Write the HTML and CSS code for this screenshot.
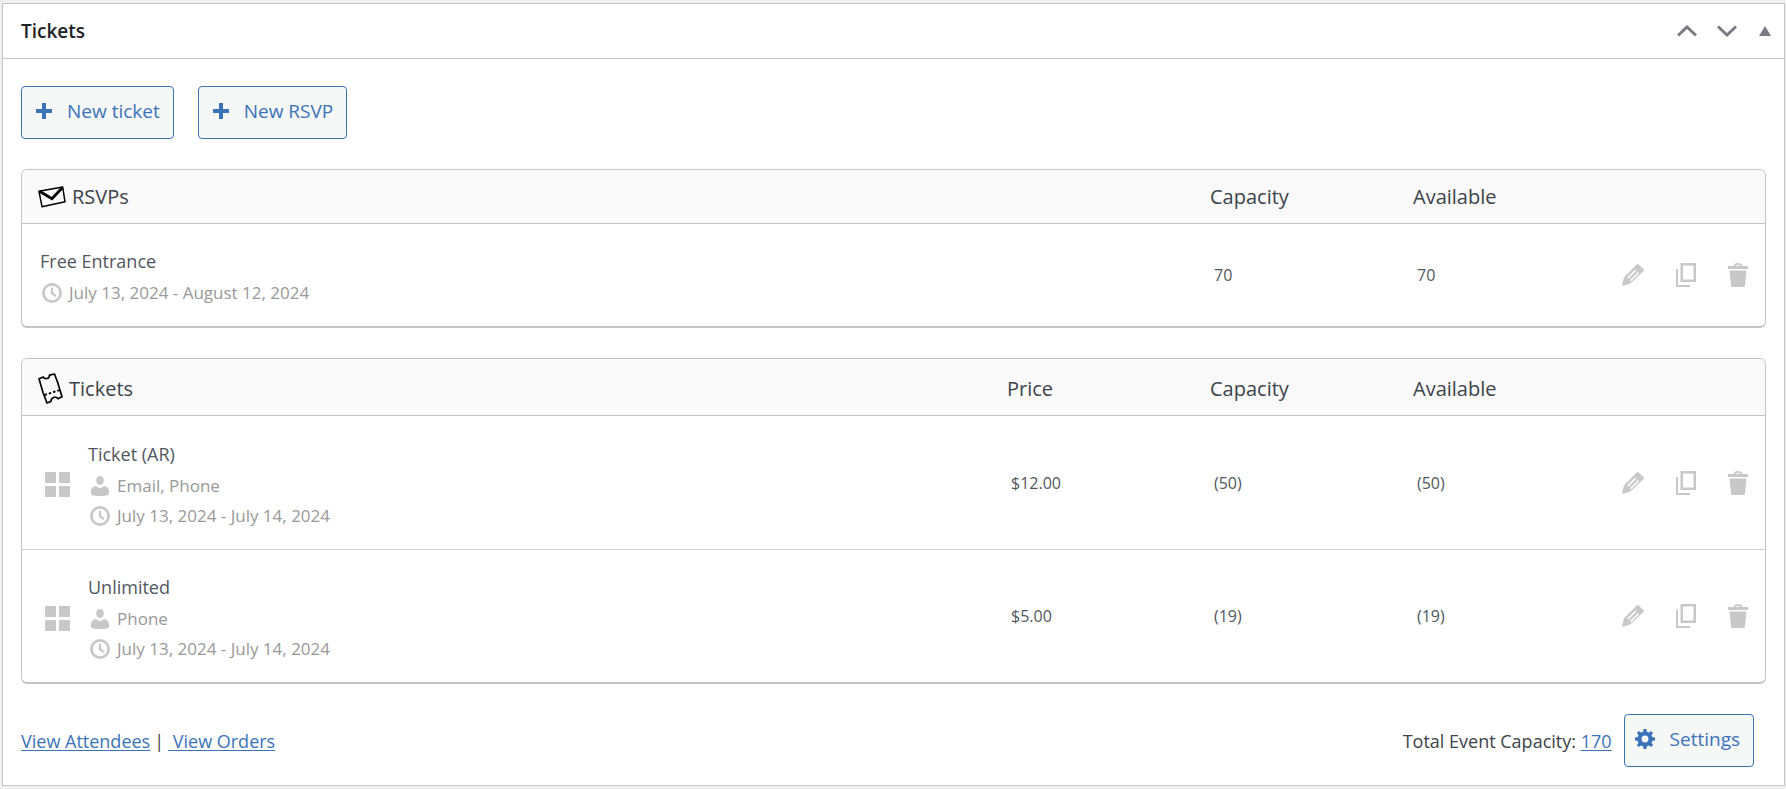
FILE: index.html
```html
<!DOCTYPE html>
<html lang="en">

<head>
    <meta charset="UTF-8">
    <meta name="viewport" content="width=device-width, initial-scale=1.0">
    <title>Tickets</title>
    <link rel="stylesheet" href="styles.css">
</head>

<body>
    <!-- shared icons -->
    <svg class="icon-defs" width="0" height="0" aria-hidden="true">
        <symbol id="icon-plus" viewBox="0 0 16 16">
            <path d="M6 0h4v6h6v4h-6v6H6v-6H0V6h6z" />
        </symbol>
        <symbol id="icon-clock" viewBox="0 0 20 20">
            <circle cx="10" cy="10" r="8.600" fill="none" stroke="currentColor" stroke-width="2.700" />
            <path d="M9 4.500h1.900l.4 5.100 3.400 3.200-1.100 1.100L8.800 11z" />
        </symbol>
        <symbol id="icon-person" viewBox="0 0 20 20">
            <ellipse cx="10" cy="4.5" rx="3.8" ry="4.5" />
            <path d="M1 18.5v-3.2C1 12 3.6 10.300 6.200 10c1.200 1.300 2.400 1.900 3.800 1.900s2.600-.6 3.800-1.900c2.600.3 5.200 2 5.200 5.300v3.200C16.500 19.500 13.500 20 10 20s-6.500-.5-9-1.500z" />
        </symbol>
        <symbol id="icon-grid" viewBox="0 0 25 25">
            <path d="M0 0h11v11H0zM14 0h11v11H14zM0 14h11v11H0zM14 14h11v11H14z" />
        </symbol>
        <symbol id="icon-edit" viewBox="0 0 22 22">
            <path fill-rule="evenodd" d="M13.700 1.600 15 .4c.5-.5 1.200-.5 1.700 0l4.900 4.900c.5.5.5 1.200 0 1.700L8.200 19.600 0 22l1.900-8.600zM5.200 13.600l1.100 1.100 8.100-8.100-1.100-1.100zM7.900 16.200l1.100 1.100 8.100-8.100-1.100-1.100z" />
        </symbol>
        <symbol id="icon-copy" viewBox="0 0 20 24">
            <path fill-rule="evenodd" d="M4.500 0H20v19H4.500zM7 2.500v14h10.500v-14zM0 6h2v16h12v2H0z" />
        </symbol>
        <symbol id="icon-trash" viewBox="0 0 20 24">
            <path fill-rule="evenodd" d="M0 3h5.500C6 1 7.800 0 10 0s4 1 4.500 3H20v3H0zM8 3h4c-.4-.8-1-1.200-2-1.200S8.400 2.200 8 3zM1.500 7.500h17L17 22.500c-.1 1-.6 1.500-1.500 1.500h-11c-.9 0-1.400-.5-1.500-1.500z" />
        </symbol>
        <symbol id="icon-gear" viewBox="0 0 20 20">
            <circle cx="10" cy="10" r="5.500" fill="none" stroke="currentColor" stroke-width="4.200" />
            <path d="M8.500 0h3l.5 4H8zM8.500 20h3l.5-4H8zM0 8.500v3l4 .5V8zM20 8.500v3l-4 .5V8zM1.900 4 4 1.900l3.200 2.500-2.800 2.800zM18.100 4 16 1.900l-3.200 2.500 2.800 2.800zM1.900 16 4 18.100l3.200-2.500-2.800-2.800zM18.100 16 16 18.100l-3.200-2.500 2.800-2.800z" />
        </symbol>
        <symbol id="icon-rsvp" viewBox="0 0 28 22">
            <path d="M1 5.300 24.700 1 27 15.800 4 20.700z" fill="none" stroke="currentColor" stroke-width="1.500" stroke-linejoin="round" />
            <path d="M1.500 5.300 14 12.800 24.500 1.500" fill="none" stroke="currentColor" stroke-width="2.800" stroke-linejoin="miter" />
        </symbol>
        <symbol id="icon-ticket" viewBox="0 0 25 31">
            <path d="M1 5.800 5.200 4c1.500 2.700 6.300 2 6.300-1.800L16.500 1l3 8 4.500 14.800-4 2c-2.500-3-6.800-1.500-7.200 2.700L9 30 5 19.500z" fill="none" stroke="currentColor" stroke-width="1.700" stroke-linejoin="round" />
            <path d="M6.500 22 22 17" fill="none" stroke="currentColor" stroke-width="1.900" stroke-dasharray="2.500 2" />
        </symbol>
    </svg>

    <div class="postbox">
        <div class="postbox-header">
            <h2>Tickets</h2>
            <div class="handle-actions">
                <button type="button" class="handle" aria-label="Move up">
                    <svg width="20" height="12" viewBox="0 0 20 12"><path d="M1 10.500 10 2l9 8.500" fill="none" stroke="currentColor" stroke-width="3" /></svg>
                </button>
                <button type="button" class="handle" aria-label="Move down">
                    <svg width="20" height="12" viewBox="0 0 20 12"><path d="M1 1.500 10 10l9-8.500" fill="none" stroke="currentColor" stroke-width="3" /></svg>
                </button>
                <button type="button" class="handle" aria-label="Toggle panel">
                    <svg width="12" height="10" viewBox="0 0 12 10"><path d="M6 0l6 10H0z" /></svg>
                </button>
            </div>
        </div>

        <div class="postbox-content">
            <div class="new-buttons">
                <button type="button" class="btn"><svg class="icon-16"><use href="#icon-plus" /></svg>New ticket</button>
                <button type="button" class="btn"><svg class="icon-16"><use href="#icon-plus" /></svg>New RSVP</button>
            </div>

            <table class="ticket-table">
                <colgroup>
                    <col>
                    <col class="col-value">
                    <col class="col-value">
                    <col class="col-actions">
                </colgroup>
                <thead>
                    <tr>
                        <th class="table-title">
                            <div class="title-wrap"><svg class="icon-rsvp"><use href="#icon-rsvp" /></svg>RSVPs</div>
                        </th>
                        <th>Capacity</th>
                        <th>Available</th>
                        <th></th>
                    </tr>
                </thead>
                <tbody>
                    <tr class="rsvp-row">
                        <td class="ticket-name">
                            <div class="name">Free Entrance</div>
                            <div class="meta"><svg class="icon-20"><use href="#icon-clock" /></svg>July 13, 2024 - August 12, 2024</div>
                        </td>
                        <td>70</td>
                        <td>70</td>
                        <td class="actions">
                            <div class="action-list">
                                <button type="button" aria-label="Edit"><svg class="icon-edit"><use href="#icon-edit" /></svg></button>
                                <button type="button" aria-label="Duplicate"><svg class="icon-tall"><use href="#icon-copy" /></svg></button>
                                <button type="button" aria-label="Delete"><svg class="icon-tall"><use href="#icon-trash" /></svg></button>
                            </div>
                        </td>
                    </tr>
                </tbody>
            </table>

            <table class="ticket-table">
                <colgroup>
                    <col class="col-drag">
                    <col>
                    <col class="col-value">
                    <col class="col-value">
                    <col class="col-value">
                    <col class="col-actions">
                </colgroup>
                <thead>
                    <tr class="tickets-head">
                        <th class="table-title" colspan="2">
                            <div class="title-wrap"><svg class="icon-ticket"><use href="#icon-ticket" /></svg>Tickets</div>
                        </th>
                        <th>Price</th>
                        <th>Capacity</th>
                        <th>Available</th>
                        <th></th>
                    </tr>
                </thead>
                <tbody>
                    <tr class="ticket-row">
                        <td class="drag"><svg class="icon-grid"><use href="#icon-grid" /></svg></td>
                        <td class="ticket-name">
                            <div class="name">Ticket (AR)</div>
                            <div class="meta"><svg class="icon-20"><use href="#icon-person" /></svg>Email, Phone</div>
                            <div class="meta"><svg class="icon-20"><use href="#icon-clock" /></svg>July 13, 2024 - July 14, 2024</div>
                        </td>
                        <td>$12.00</td>
                        <td>(50)</td>
                        <td>(50)</td>
                        <td class="actions">
                            <div class="action-list">
                                <button type="button" aria-label="Edit"><svg class="icon-edit"><use href="#icon-edit" /></svg></button>
                                <button type="button" aria-label="Duplicate"><svg class="icon-tall"><use href="#icon-copy" /></svg></button>
                                <button type="button" aria-label="Delete"><svg class="icon-tall"><use href="#icon-trash" /></svg></button>
                            </div>
                        </td>
                    </tr>
                    <tr class="ticket-row">
                        <td class="drag"><svg class="icon-grid"><use href="#icon-grid" /></svg></td>
                        <td class="ticket-name">
                            <div class="name">Unlimited</div>
                            <div class="meta"><svg class="icon-20"><use href="#icon-person" /></svg>Phone</div>
                            <div class="meta"><svg class="icon-20"><use href="#icon-clock" /></svg>July 13, 2024 - July 14, 2024</div>
                        </td>
                        <td>$5.00</td>
                        <td>(19)</td>
                        <td>(19)</td>
                        <td class="actions">
                            <div class="action-list">
                                <button type="button" aria-label="Edit"><svg class="icon-edit"><use href="#icon-edit" /></svg></button>
                                <button type="button" aria-label="Duplicate"><svg class="icon-tall"><use href="#icon-copy" /></svg></button>
                                <button type="button" aria-label="Delete"><svg class="icon-tall"><use href="#icon-trash" /></svg></button>
                            </div>
                        </td>
                    </tr>
                </tbody>
            </table>

            <div class="postbox-footer">
                <div class="footer-links"><a href="#">View Attendees</a><span class="divider">|</span><a href="#">&nbsp;View Orders</a></div>
                <div class="footer-right">
                    <span>Total Event Capacity: <a href="#">170</a></span>
                    <button type="button" class="btn btn-settings"><svg class="icon-20"><use href="#icon-gear" /></svg>Settings</button>
                </div>
            </div>
        </div>
    </div>
</body>

</html>
```
FILE: styles.css
```css
* {
    box-sizing: border-box;
}

body {
    margin: 0;
    padding: 3px 1px 2px 2px;
    background-color: #f0f0f1;
    color: #3c434a;
    font-family: "Open Sans", "Noto Sans", sans-serif;
    font-size: 18px;
    line-height: 24px;
}

svg {
    display: block;
    flex: none;
    fill: currentColor;
}

a {
    color: #3b73b9;
    text-underline-offset: 2px;
    text-decoration-thickness: 1px;
}

button {
    font-family: inherit;
    cursor: pointer;
}

.icon-defs {
    position: absolute;
}

.icon-16 {
    width: 16px;
    height: 16px;
}

.icon-20 {
    width: 20px;
    height: 20px;
}

.icon-edit {
    width: 22px;
    height: 22px;
}

.icon-tall {
    width: 20px;
    height: 24px;
}

.icon-grid {
    width: 25px;
    height: 25px;
}

.icon-rsvp {
    width: 28px;
    height: 22px;
}

.icon-ticket {
    width: 25px;
    height: 31px;
}

.postbox {
    background-color: #fff;
    border: 1px solid #c3c4c7;
}

.postbox-header {
    display: flex;
    align-items: center;
    justify-content: space-between;
    height: 55px;
    padding: 0 13px 0 18px;
    border-bottom: 1px solid #c3c4c7;
}

.postbox-header h2 {
    margin: 0;
    font-size: 19px;
    font-weight: 600;
    color: #1d2327;
}

.handle-actions {
    display: flex;
    align-items: center;
    gap: 20px;
}

.handle-actions .handle:last-child {
    margin-left: 2px;
}

.handle {
    padding: 0;
    border: 0;
    background: none;
    color: #787c82;
}

.postbox-content {
    padding: 27px 18px 18px;
}

.new-buttons {
    display: flex;
    gap: 24px;
    margin-bottom: 30px;
}

.btn {
    display: flex;
    align-items: center;
    gap: 15px;
    height: 53px;
    padding: 0 13px 4px 14px;
    font-size: 19px;
    line-height: 24px;
    color: #3b73b9;
    background-color: #f6f7f7;
    border: 1px solid #3b73b9;
    border-radius: 4px;
}

.ticket-table {
    width: 100%;
    margin-bottom: 30px;
    table-layout: fixed;
    border: 1px solid #c3c4c7;
    border-bottom-width: 2px;
    border-radius: 6px;
    border-collapse: separate;
    border-spacing: 0;
    overflow: hidden;
}

.col-drag {
    width: 66px;
}

.col-value {
    width: 203px;
}

.col-actions {
    width: 158px;
}

.ticket-table th {
    padding: 11px 9px;
    font-size: 20px;
    font-weight: 400;
    line-height: 31px;
    text-align: left;
    background-color: #fafafa;
    border-bottom: 1px solid #c3c4c7;
}

.ticket-table .tickets-head th {
    padding-top: 14px;
}

.ticket-table .table-title {
    padding-left: 16px;
}

.title-wrap {
    display: flex;
    align-items: center;
    gap: 6px;
}

.title-wrap svg {
    color: #000;
}

.ticket-table td {
    padding: 0 13px;
    font-size: 16px;
    color: #50575e;
}

.ticket-table tr + tr td {
    border-top: 1px solid #d0d1d3;
}

.rsvp-row {
    height: 102px;
}

.ticket-row {
    height: 133px;
}

.ticket-table .drag {
    padding: 4px 0 0 23px;
    color: #c8c8c8;
}

.ticket-table .ticket-name {
    padding: 2px 0 0 18px;
}

.ticket-table .drag + .ticket-name {
    padding-left: 0;
}

.name {
    font-size: 18px;
    line-height: 34px;
}

.meta {
    display: flex;
    align-items: center;
    gap: 7px;
    padding-left: 2px;
    font-size: 17px;
    line-height: 30px;
    color: #999;
}

.meta svg {
    color: #c8c8c8;
}

.ticket-table .actions {
    padding: 0 17px 0 0;
}

.action-list {
    display: flex;
    align-items: center;
    justify-content: flex-end;
    gap: 32px;
}

.action-list button {
    padding: 0;
    border: 0;
    background: none;
    color: #c8c8c8;
}

.postbox-footer {
    display: flex;
    align-items: center;
    justify-content: space-between;
    padding-right: 12px;
}

.divider {
    padding: 0 4px;
}

.footer-right {
    display: flex;
    align-items: center;
    gap: 12px;
}

.btn-settings {
    padding-left: 10px;
}
```
